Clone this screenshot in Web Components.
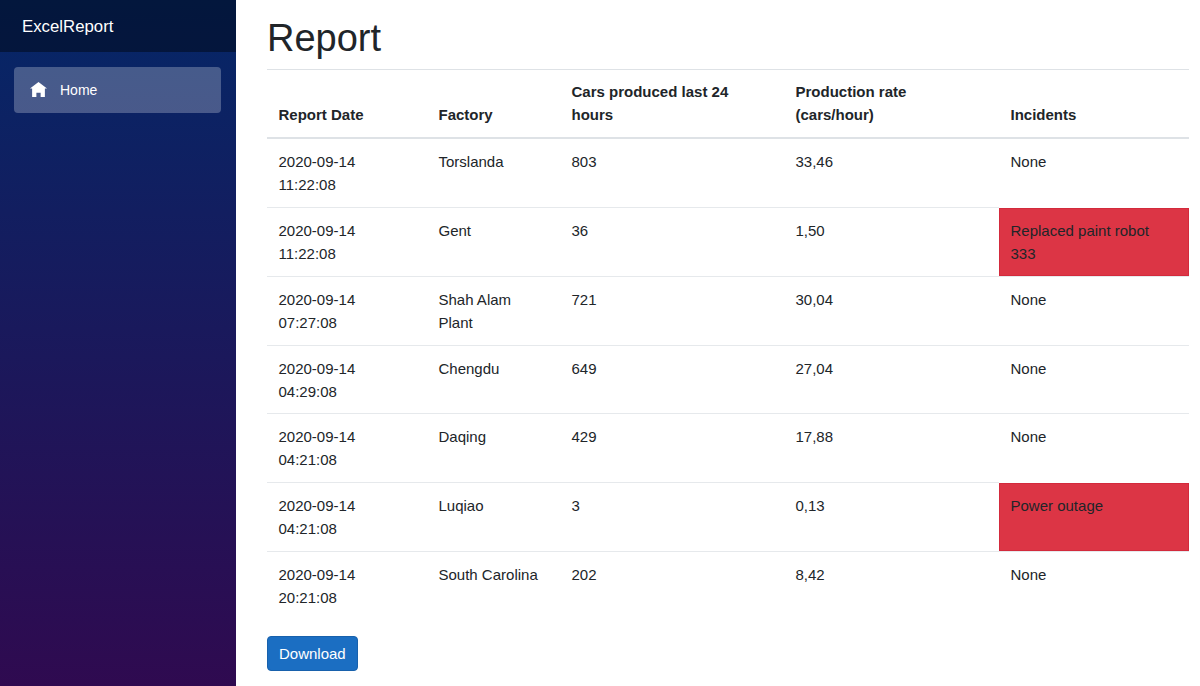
<!DOCTYPE html>
<html><head><meta charset="utf-8"><style>
html,body{margin:0;padding:0;height:686px;overflow:hidden;font-family:"Liberation Sans",Arial,sans-serif;color:#212529;background:#fff}
</style></head><body>
<app-shell>
<side-bar slot="side" brand="ExcelReport"><nav-link label="Home"></nav-link></side-bar>
<report-page title-text="Report">
<report-table></report-table>
<app-button>Download</app-button>
</report-page>
</app-shell>
<script>
customElements.define('app-shell',class extends HTMLElement{constructor(){super();this.attachShadow({mode:'open'}).innerHTML=`<style>:host{display:flex;height:686px}main{flex:1;min-width:0}</style><slot name="side"></slot><main><slot></slot></main>`}});
customElements.define('side-bar',class extends HTMLElement{constructor(){super();this.attachShadow({mode:'open'}).innerHTML=`<style>:host{display:block;width:236px;flex:none;height:686px;background:linear-gradient(180deg,#052767 0%,#2f0a50 100%);color:#fff}
.b{height:52px;box-sizing:border-box;padding:1px 0 0 22px;display:flex;align-items:center;background:rgba(0,0,0,.4);font-size:16.8px}
.n{padding:15px 15px 15px 14px}</style><div class="b">${this.getAttribute('brand')}</div><div class="n"><slot></slot></div>`}});
customElements.define('nav-link',class extends HTMLElement{constructor(){super();this.attachShadow({mode:'open'}).innerHTML=`<style>:host{display:flex;align-items:center;box-sizing:border-box;width:207px;height:46px;background:rgba(255,255,255,.25);border-radius:4px;font-size:14px;color:#fff;padding-left:16px;gap:13px}svg{width:17px;height:17px;fill:#fff}</style><svg viewBox="0 0 8 8"><path d="M4 0L0 3h1v4h2V5h2v2h2V3.02L8 3z"/></svg><span>${this.getAttribute('label')}</span>`}});
customElements.define('report-page',class extends HTMLElement{constructor(){super();this.attachShadow({mode:'open'}).innerHTML=`<style>:host{display:block;padding:0 11px 0 31px}h1{margin:0;height:68.5px;box-sizing:border-box;padding-top:14px;font-weight:400;font-size:38px;line-height:48px;color:#212529}</style><h1>${this.getAttribute('title-text')}</h1><slot></slot>`}});
const rows=[['2020-09-14 11:22:08','Torslanda','803','33,46','None'],['2020-09-14 11:22:08','Gent','36','1,50','Replaced paint robot 333',1],['2020-09-14 07:27:08','Shah Alam Plant','721','30,04','None'],['2020-09-14 04:29:08','Chengdu','649','27,04','None'],['2020-09-14 04:21:08','Daqing','429','17,88','None'],['2020-09-14 04:21:08','Luqiao','3','0,13','Power outage',1],['2020-09-14 20:21:08','South Carolina','202','8,42','None']];
customElements.define('report-table',class extends HTMLElement{constructor(){super();this.attachShadow({mode:'open'}).innerHTML=`<style>:host{display:block;font-size:15px;line-height:23px}
table{border-collapse:collapse;width:922px;table-layout:fixed}
th{text-align:left;vertical-align:bottom;padding:10px 11.5px 11.8px;border-top:1px solid #dee2e6;border-bottom:2px solid #dee2e6;font-weight:700}
td{vertical-align:top;padding:11px 11.5px 10.8px;border-top:1px solid #e6e9ec}
tr:first-child td{border-top:0}
td.bad{background:#dc3545;box-shadow:inset 0 0 0 1px #d32a3c;border-top:0}
</style><table><colgroup><col style="width:160px"><col style="width:133px"><col style="width:224px"><col style="width:215px"><col></colgroup><thead><tr><th>Report Date</th><th>Factory</th><th>Cars produced last 24 hours</th><th>Production rate (cars/hour)</th><th>Incidents</th></tr></thead><tbody>${rows.map(r=>`<tr><td>${r[0]}</td><td>${r[1]}</td><td>${r[2]}</td><td>${r[3]}</td><td${r[5]?' class="bad"':''}>${r[4]}</td></tr>`).join('')}</tbody></table>`}});
customElements.define('app-button',class extends HTMLElement{constructor(){super();this.attachShadow({mode:'open'}).innerHTML=`<style>:host{display:inline-block;margin-top:16px;background:#1b6ec2;border:1px solid #1861ac;border-radius:4px;color:#fff;font-size:15px;line-height:21px;padding:6px 11.5px 6px 11px}</style><slot></slot>`}});
</script></body></html>
